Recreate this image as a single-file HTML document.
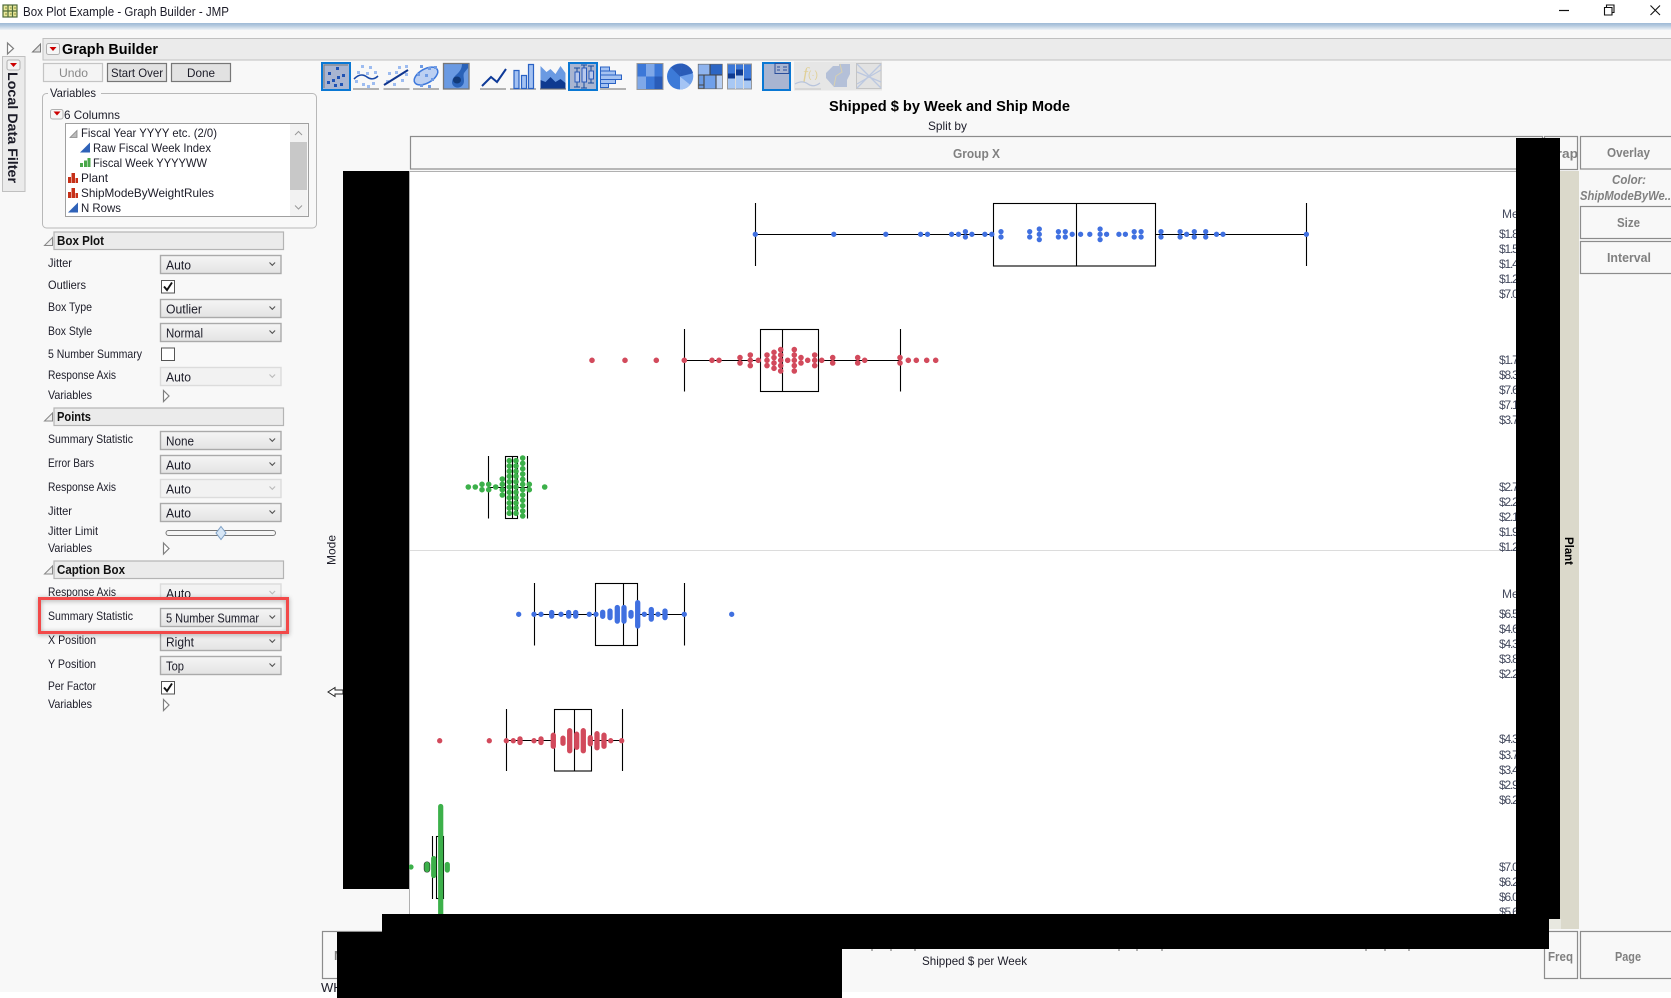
<!DOCTYPE html>
<html lang="en"><head><meta charset="utf-8"><title>Box Plot Example - Graph Builder - JMP</title>
<style>
html,body{margin:0;padding:0;background:#fff;width:1671px;height:998px;overflow:hidden}
svg{display:block;position:absolute;left:0;top:0}
text{font-family:"Liberation Sans",sans-serif;font-size:12px;fill:#1c1c28;white-space:pre}
.b{font-weight:bold}
.h{font-weight:bold;font-size:13px;fill:#111}
.g{font-weight:bold;fill:#808080;font-size:13px}
.c{font-size:12.5px}
.s{fill:#444a5e;font-size:12px;letter-spacing:-1.2px}
.sec{fill:#ebebeb;stroke:#b4b4b4;stroke-width:1.2}
.cb{fill:url(#cg);stroke:#aaa;stroke-width:1.4}
.cd{fill:#f2f2f2;stroke:#dcdcdc;stroke-width:1.4}
.ch{fill:none;stroke:#555;stroke-width:1.1}
.chd{fill:none;stroke:#bbb;stroke-width:1.1}
.tri{fill:#fff;stroke:#808080;stroke-width:1.2}
.gbx{fill:#f8f8f8;stroke:#8c8c8c;stroke-width:1.2}
.bx{fill:#fff;stroke:#000;stroke-width:1.1}
.wh{fill:none;stroke:#000;stroke-width:1.1}
.d{fill:none;stroke-linecap:round}
</style></head><body>
<svg width="1671" height="998" viewBox="0 0 1671 998" xmlns="http://www.w3.org/2000/svg">
<defs>
<linearGradient id="cg" x1="0" y1="0" x2="0" y2="1"><stop offset="0" stop-color="#f5f5f5"/><stop offset="1" stop-color="#e3e3e3"/></linearGradient>
<linearGradient id="st" x1="0" y1="0" x2="0" y2="1"><stop offset="0" stop-color="#9fbad6"/><stop offset=".4" stop-color="#b6cbe0"/><stop offset="1" stop-color="#eef2f6"/></linearGradient>
<filter id="sh" x="-10%" y="-40%" width="120%" height="180%"><feDropShadow dx="0" dy="1" stdDeviation="2.5" flood-color="#000" flood-opacity=".35"/></filter>
</defs>

<!-- backgrounds -->
<rect width="1671" height="998" fill="#fff"/>
<rect x="0" y="30" width="1671" height="962" fill="#f8f8f8"/>
<rect x="0" y="23" width="1671" height="7" fill="url(#st)"/>

<!-- title bar -->
<g>
<rect x="3" y="5" width="14" height="12" fill="#e8e89a" stroke="#4f6b3a" stroke-width="1.2"/>
<path d="M8 5V17M12.5 5V17M3 11H17" stroke="#4f6b3a" stroke-width="1.2" fill="none"/>
<path d="M5 8h2M10 8h1.5M14 8h2M5 14h2M10 14h1.5M14 14h2" stroke="#8a8a30" fill="none"/>
</g>
<text x="23" y="16" textLength="206" lengthAdjust="spacingAndGlyphs" style="font-size:13px">Box Plot Example - Graph Builder - JMP</text>
<path d="M1559 10.5h10" stroke="#111" stroke-width="1.2"/>
<path d="M1604.5 7.5h7.5v7.5h-7.5zM1606.5 7.5v-2.5h7.5v7.5h-2" fill="none" stroke="#111" stroke-width="1.1"/>
<path d="M1650.5 5.5l9.5 9.5M1660 5.5l-9.5 9.5" stroke="#111" stroke-width="1.1"/>

<!-- header -->
<path d="M7.5 43l6 5.5-6 5.5z" class="tri"/>
<rect x="2.5" y="56.5" width="22.5" height="135" fill="#ebebeb" stroke="#c0c0c0"/>
<rect x="7" y="60" width="13" height="10" rx="2" fill="#f4f4f4" stroke="#b0b0b0"/>
<path d="M10 63h7l-3.500 4z" fill="#c00"/>
<text class="b" transform="translate(8,72) rotate(90)" textLength="111" lengthAdjust="spacingAndGlyphs" style="font-size:14px">Local Data Filter</text>

<rect x="43" y="38.500" width="1640" height="21.500" fill="#ebebeb" stroke="#c0c0c0"/>
<path d="M32.500 52l8-8v8z" fill="#ddd" stroke="#777"/>
<rect x="46.500" y="43.500" width="13" height="11" rx="2" fill="#f6f6f6" stroke="#b0b0b0"/>
<path d="M49.500 47h7l-3.500 4z" fill="#c00"/>
<text class="b" x="62" y="54" textLength="96" lengthAdjust="spacingAndGlyphs" style="font-size:15px;fill:#000">Graph Builder</text>

<rect x="43.500" y="63.500" width="59" height="18" fill="#f4f4f4" stroke="#c4c4c4" stroke-width="1.200"/>
<text x="59" y="77" textLength="29" lengthAdjust="spacingAndGlyphs" style="fill:#888">Undo</text>
<rect x="107.500" y="63.500" width="59" height="18" fill="#e2e2e2" stroke="#777" stroke-width="1.200"/>
<text x="111" y="77" textLength="52" lengthAdjust="spacingAndGlyphs">Start Over</text>
<rect x="171.500" y="63.500" width="59" height="18" fill="#e2e2e2" stroke="#777" stroke-width="1.200"/>
<text x="187" y="77" textLength="28" lengthAdjust="spacingAndGlyphs">Done</text>

<!-- variables -->
<rect x="42.500" y="93.500" width="274" height="134.500" rx="4" fill="#f8f8f8" stroke="#b8b8b8"/>
<rect x="48" y="86" width="53" height="12" fill="#f8f8f8"/>
<text x="50" y="97" textLength="46" lengthAdjust="spacingAndGlyphs">Variables</text>
<rect x="50.500" y="109.500" width="12.500" height="9.500" rx="2" fill="#f6f6f6" stroke="#b0b0b0"/>
<path d="M53.500 111.500h7l-3.500 4z" fill="#c00"/>
<text x="64" y="119" textLength="56" lengthAdjust="spacingAndGlyphs">6 Columns</text>
<rect x="65.500" y="123.500" width="243" height="93" fill="#fff" stroke="#a0a0a0"/>
<rect x="290" y="124" width="17.500" height="92" fill="#f2f2f2"/>
<rect x="290" y="142" width="17" height="48" fill="#c8c8c8"/>
<path d="M295 135l3.500-3.500 3.500 3.500M295 205.500l3.500 3.500 3.500-3.500" fill="none" stroke="#999"/>
<path d="M70 137.500l7-7v7z" fill="#bbb" stroke="#888" stroke-width=".8"/>
<text x="81" y="137" textLength="136" lengthAdjust="spacingAndGlyphs">Fiscal Year YYYY etc. (2/0)</text>
<path d="M80 152.500l10-10v10z" fill="#2f62b8"/>
<text x="93" y="152" textLength="118" lengthAdjust="spacingAndGlyphs">Raw Fiscal Week Index</text>
<path d="M80 163h3v4h-3zM84 160.500h3v6.500h-3zM87.500 158h3v9h-3z" fill="#4aa84a"/>
<text x="93" y="167" textLength="114" lengthAdjust="spacingAndGlyphs">Fiscal Week YYYYWW</text>
<path d="M68 177h3v6h-3zM71.500 173h3.500v10h-3.500zM75.500 178h2.500v5h-2.500z" fill="#c63018"/>
<text x="81" y="182" textLength="27" lengthAdjust="spacingAndGlyphs">Plant</text>
<path d="M68 192h3v6h-3zM71.500 188h3.500v10h-3.500zM75.500 193h2.500v5h-2.500z" fill="#c63018"/>
<text x="81" y="197" textLength="133" lengthAdjust="spacingAndGlyphs">ShipModeByWeightRules</text>
<path d="M68 212.500l10-10v10z" fill="#2f62b8"/>
<text x="81" y="212" textLength="40" lengthAdjust="spacingAndGlyphs">N Rows</text>

<!-- section: box plot -->
<path d="M44.500 245.500l8-8v8z" fill="#eee" stroke="#888"/>
<rect class="sec" x="54" y="232" width="229.500" height="17.500"/>
<text class="h" x="57" y="245" textLength="47" lengthAdjust="spacingAndGlyphs">Box Plot</text>
<text x="48" y="267" textLength="24" lengthAdjust="spacingAndGlyphs">Jitter</text>
<rect class="cb" x="160.500" y="255.500" width="120.500" height="18"/><path class="ch" d="M269.500 262.500l2.800 2.800 2.800-2.800"/>
<text class="c" x="166" y="269.500" textLength="25" lengthAdjust="spacingAndGlyphs">Auto</text>
<text x="48" y="289" textLength="38" lengthAdjust="spacingAndGlyphs">Outliers</text>
<rect x="161.500" y="280.500" width="13" height="12.500" fill="#fff" stroke="#555"/>
<path d="M164 286.500l3 3.500 5-7.500" fill="none" stroke="#111" stroke-width="1.900"/>
<text x="48" y="311" textLength="44" lengthAdjust="spacingAndGlyphs">Box Type</text>
<rect class="cb" x="160.500" y="299.500" width="120.500" height="18"/><path class="ch" d="M269.500 306.500l2.800 2.800 2.800-2.800"/>
<text class="c" x="166" y="313.500" textLength="36" lengthAdjust="spacingAndGlyphs">Outlier</text>
<text x="48" y="335" textLength="44" lengthAdjust="spacingAndGlyphs">Box Style</text>
<rect class="cb" x="160.500" y="323.500" width="120.500" height="18"/><path class="ch" d="M269.500 330.500l2.800 2.800 2.800-2.800"/>
<text class="c" x="166" y="337.500" textLength="37" lengthAdjust="spacingAndGlyphs">Normal</text>
<text x="48" y="358" textLength="94" lengthAdjust="spacingAndGlyphs">5 Number Summary</text>
<rect x="161.500" y="348" width="13" height="12.500" fill="#fff" stroke="#555"/>
<text x="48" y="379" textLength="68" lengthAdjust="spacingAndGlyphs">Response Axis</text>
<rect class="cd" x="160.500" y="367.500" width="120.500" height="18"/><path class="chd" d="M269.500 374.500l2.800 2.800 2.800-2.800"/>
<text class="c" x="166" y="381.500" textLength="25" lengthAdjust="spacingAndGlyphs">Auto</text>
<text x="48" y="399" textLength="44" lengthAdjust="spacingAndGlyphs">Variables</text>
<path class="tri" d="M163.500 390.500l5.500 5.500-5.500 5.500z"/>

<!-- section: points -->
<path d="M44.500 421l8-8v8z" fill="#eee" stroke="#888"/>
<rect class="sec" x="54" y="408" width="229.500" height="17.500"/>
<text class="h" x="57" y="421" textLength="34" lengthAdjust="spacingAndGlyphs">Points</text>
<text x="48" y="443" textLength="85" lengthAdjust="spacingAndGlyphs">Summary Statistic</text>
<rect class="cb" x="160.500" y="431.500" width="120.500" height="18"/><path class="ch" d="M269.500 438.500l2.800 2.800 2.800-2.800"/>
<text class="c" x="166" y="445.500" textLength="28" lengthAdjust="spacingAndGlyphs">None</text>
<text x="48" y="467" textLength="46" lengthAdjust="spacingAndGlyphs">Error Bars</text>
<rect class="cb" x="160.500" y="455.500" width="120.500" height="18"/><path class="ch" d="M269.500 462.500l2.800 2.800 2.800-2.800"/>
<text class="c" x="166" y="469.500" textLength="25" lengthAdjust="spacingAndGlyphs">Auto</text>
<text x="48" y="491" textLength="68" lengthAdjust="spacingAndGlyphs">Response Axis</text>
<rect class="cd" x="160.500" y="479.500" width="120.500" height="18"/><path class="chd" d="M269.500 486.500l2.800 2.800 2.800-2.800"/>
<text class="c" x="166" y="493.500" textLength="25" lengthAdjust="spacingAndGlyphs">Auto</text>
<text x="48" y="515" textLength="24" lengthAdjust="spacingAndGlyphs">Jitter</text>
<rect class="cb" x="160.500" y="503.500" width="120.500" height="18"/><path class="ch" d="M269.500 510.500l2.800 2.800 2.800-2.800"/>
<text class="c" x="166" y="517.500" textLength="25" lengthAdjust="spacingAndGlyphs">Auto</text>
<text x="48" y="535" textLength="50" lengthAdjust="spacingAndGlyphs">Jitter Limit</text>
<rect x="166" y="530.500" width="109.500" height="5" rx="2.500" fill="#f6f6f6" stroke="#777"/>
<path d="M221 526.500l5 6.500-5 6.500-5-6.500z" fill="#d6e6f6" stroke="#7fa0c4"/>
<text x="48" y="552" textLength="44" lengthAdjust="spacingAndGlyphs">Variables</text>
<path class="tri" d="M163.500 543l5.500 5.500-5.500 5.500z"/>

<!-- section: caption box -->
<path d="M44.500 574l8-8v8z" fill="#eee" stroke="#888"/>
<rect class="sec" x="54" y="561" width="229.500" height="17.500"/>
<text class="h" x="57" y="574" textLength="68" lengthAdjust="spacingAndGlyphs">Caption Box</text>
<text x="48" y="596" textLength="68" lengthAdjust="spacingAndGlyphs">Response Axis</text>
<path d="M160.500 597v-13h120.500v13" fill="#f2f2f2" stroke="#dcdcdc" stroke-width="1.400"/>
<path class="chd" d="M269.500 591l2.800 2.800 2.800-2.800"/>
<text class="c" x="166" y="598" textLength="25" lengthAdjust="spacingAndGlyphs">Auto</text>
<rect class="cb" x="160.500" y="632.500" width="120.500" height="18"/><path class="ch" d="M269.500 639.500l2.800 2.800 2.800-2.800"/>
<text x="48" y="644" textLength="48" lengthAdjust="spacingAndGlyphs">X Position</text>
<text class="c" x="166" y="646.500" textLength="28" lengthAdjust="spacingAndGlyphs">Right</text>
<rect x="40" y="597" width="248" height="36" fill="#f8f8f8"/>
<text x="48" y="620" textLength="85" lengthAdjust="spacingAndGlyphs">Summary Statistic</text>
<rect class="cb" x="160.500" y="608.500" width="120.500" height="18"/><path class="ch" d="M269.500 615.500l2.800 2.800 2.800-2.800"/>
<text class="c" x="166" y="622.500" textLength="93" lengthAdjust="spacingAndGlyphs">5 Number Summar</text>
<rect x="39.500" y="598.500" width="248" height="34" fill="none" stroke="#f24a4a" stroke-width="3" filter="url(#sh)"/>
<text x="48" y="668" textLength="48" lengthAdjust="spacingAndGlyphs">Y Position</text>
<rect class="cb" x="160.500" y="656.500" width="120.500" height="18"/><path class="ch" d="M269.500 663.500l2.800 2.800 2.800-2.800"/>
<text class="c" x="166" y="670.500" textLength="18" lengthAdjust="spacingAndGlyphs">Top</text>
<text x="48" y="690" textLength="48" lengthAdjust="spacingAndGlyphs">Per Factor</text>
<rect x="161.500" y="681.500" width="13" height="12.500" fill="#fff" stroke="#555"/>
<path d="M164 687.500l3 3.500 5-7.500" fill="none" stroke="#111" stroke-width="1.900"/>
<text x="48" y="708" textLength="44" lengthAdjust="spacingAndGlyphs">Variables</text>
<path class="tri" d="M163.500 699.500l5.500 5.500-5.500 5.500z"/>

<!-- toolbar -->
<g fill="#6f9be4">
<rect x="322" y="63" width="28" height="27" fill="#a9b5d1" stroke="#0a78d4" stroke-width="2"/>
<path d="M324 88V65h24" fill="none" stroke="#777"/>
<path d="M336 67h3v3h-3zM328 72h3v3h-3zM342 74h3v3h-3zM332 79h3v3h-3zM337 76h3v3h-3zM327 81h3v3h-3zM340 83h3v3h-3zM334 84h3v3h-3z" fill="#1f52b4"/>
<path d="M353 89h26" stroke="#888" stroke-width="1.300"/>
<path d="M361 65h3v3h-3zM369 66h3v3h-3zM357 71h3v3h-3zM374 71h3v3h-3zM366 72h3v3h-3zM355 80h3v3h-3zM362 83h3v3h-3zM372 82h3v3h-3zM367 85h3v3h-3z" fill="#9dbcf0"/>
<path d="M354 79c5-5 9-5 13-2s8 2 11-1" fill="none" stroke="#1a4aa8" stroke-width="1.600"/>
<path d="M383.500 89h26" stroke="#888" stroke-width="1.300"/>
<path d="M398 66h3v3h-3zM405 65h3v3h-3zM388 72h3v3h-3zM395 71h3v3h-3zM386 80h3v3h-3zM393 83h3v3h-3zM401 79h3v3h-3zM405 73h3v3h-3z" fill="#9dbcf0"/>
<path d="M384 85l24-15" stroke="#10368f" stroke-width="2" fill="none"/>
<path d="M413 89h26" stroke="#888" stroke-width="1.300"/>
<ellipse cx="426" cy="76" rx="13" ry="7" transform="rotate(-30 426 76)" fill="#bcd0f2" stroke="#3d78dc" stroke-width="1.500"/>
<path d="M420 65h3v3h-3zM428 67h3v3h-3zM434 66h3v3h-3zM417 73h3v3h-3zM425 74h3v3h-3zM431 78h3v3h-3zM420 84h3v3h-3zM428 85h3v3h-3z"/>
<rect x="443.500" y="63.500" width="25.500" height="25.500" fill="#6a9ae2" stroke="#777" stroke-width="1.300"/>
<path d="M462 64c0 6-4 9-7 12-4 4-4 9 0 11s9-1 9-6c0-4-1-5 0-8l4-5v-4z" fill="#2a62b8"/>
<ellipse cx="457" cy="80" rx="4" ry="3.500" fill="#123a78"/>
<path d="M480 89h26" stroke="#888" stroke-width="1.300"/>
<path d="M482 86l9-9 6 5 9-13" fill="none" stroke="#0e3a98" stroke-width="2"/>
<path d="M510 89h26" stroke="#888" stroke-width="1.300"/>
<path d="M514 70.500h5v18h-5zM521.500 75.500h5v13h-5zM528.500 64.500h5v24h-5z" fill="#a4c2f2" stroke="#2a62c4" stroke-width="1.200"/>
<path d="M540 89h26" stroke="#777" stroke-width="1.300"/>
<path d="M540.500 88.500V66l6 6 4-3 5 5 5-8 5 7v15.500z" fill="#6a9ae2"/>
<path d="M540.500 88.500V80l5 2 5-5 5 5 5-3 5 4v5.500z" fill="#0e3a90"/>
<rect x="569" y="63" width="28" height="27" fill="#a9b5d1" stroke="#0a78d4" stroke-width="2"/>
<path d="M577 68v19M574 68h6M574 87h6M584 64.500v24M581 65h6M581 88h6M591 66v17M588 66h6M588 83h6" fill="none" stroke="#174a9c"/>
<path d="M575 72h4.500v10H575zM582 68h4.500v14H582zM589 71h4.500v8H589z" fill="#b8c8ec" stroke="#2b5ab8"/>
<path d="M600 89h26" stroke="#888" stroke-width="1.300"/>
<path d="M600.500 67h9v4h-9zM600.500 71h15v4h-15zM600.500 75h21v4.500h-21zM600.500 79.500h15v4h-15zM600.500 83.500h8v4h-8z" fill="#a4c2f2" stroke="#2a62c4"/>
<rect x="637" y="63.500" width="26" height="26" fill="#a8c4f0" stroke="#999"/>
<path d="M637.500 64h8.500v12.500h-8.500zM654.500 64h8v12.500h-8zM646 76.500h8.500v12.500h-8.500z" fill="#3c78d8"/>
<path d="M646 64h8.500v12.500h-8.500zM637.500 76.500h8.500v12.500h-8.500z" fill="#7fa8e8"/>
<path d="M654.500 76.500h8v12.500h-8z" fill="#2a5cb8"/>
<circle cx="680" cy="76.500" r="13" fill="#3c7ad8"/>
<path d="M680 76.500l2-13c6 1 10 5 11 9.500z" fill="#2a5cb8"/>
<path d="M680 76.500l13-3c1 5-1 9-3 11z" fill="#6fa0ea"/>
<path d="M680 76.500l10 8c-2 3-5 5-10 5z" fill="#a4c4f4"/>
<path d="M680 76.500l-9-9c2-2 7-4 11-4z" fill="#2a5cb8"/>
<rect x="698.500" y="64.500" width="23.500" height="24" fill="#6a9ae2" stroke="#666" stroke-width="1.300"/>
<path d="M710 64.500h12v10.500h-12z" fill="#2c66c4"/>
<path d="M698.500 64.500h11.500v10.500h-11.500z" fill="#8fb4ee"/>
<path d="M704 75h12v13.500h-12z" fill="#6fa0ea"/>
<path d="M716 75h6v13.500h-6z" fill="#b8d0f4"/>
<path d="M698.500 75H722M710 64.500V75M704 75v13.500M716 75v13.500M698.500 85h5.500" fill="none" stroke="#444" stroke-width="1.100"/>
<rect x="727.500" y="64" width="24" height="25" fill="#a8c8f4" stroke="#999"/>
<path d="M728 64.500h7v9h-7zM736 64.500h7v5h-7zM744 64.500h7v14h-7z" fill="#3c78d8"/>
<path d="M728 73.500h7v5h-7zM736 69.500h7v6h-7zM744 78.500h7v2h-7z" fill="#0e3a90"/>
<path d="M735.500 64v25M743.500 64v25" stroke="#ddd"/>
<rect x="763" y="63" width="27" height="27" fill="#a9b5d1" stroke="#0a78d4" stroke-width="2"/>
<rect x="775" y="63.500" width="14" height="10" fill="#a9b5d1" stroke="#2a4e9c"/>
<path d="M777 67h3M777 70h3M783 67h4M783 70h4" stroke="#2a4e9c" fill="none"/>
<rect x="794" y="61.500" width="88" height="29" fill="#e6e6e6"/>
<text x="803" y="79" style="font-family:'Liberation Serif',serif;font-style:italic;font-size:17px;fill:#e0d098">f</text>
<text x="808" y="78" style="font-size:10px;fill:#e0d098">(·)</text>
<path d="M795 84c5-3 9-3 13 0s8 2 12-1" fill="none" stroke="#b8c4dc" stroke-width="1.200"/>
<path d="M795 89h26" stroke="#ccc" stroke-width="1.200"/>
<path d="M826 73l7-7h6v-2h11v10l-3 6v7h-13l-8-9z" fill="#b4c0d8"/>
<path d="M840 64l2 8-6 4-2 10" fill="none" stroke="#d8d0b0"/>
<rect x="856.500" y="63.500" width="24.500" height="25" fill="#e2e2e2" stroke="#c4c4c4"/>
<path d="M857 64l24 24M857 72l24 10M857 84l24-14M857 88l24-24" stroke="#bcc8e0" stroke-width="1.300" fill="none"/>
</g>

<!-- titles -->
<text class="b" x="829" y="111" textLength="241" lengthAdjust="spacingAndGlyphs" style="font-size:15px;fill:#000">Shipped $ by Week and Ship Mode</text>
<text x="928" y="130" textLength="39" lengthAdjust="spacingAndGlyphs">Split by</text>

<!-- drop zones -->
<rect class="gbx" x="410.500" y="136.500" width="1132" height="32.500"/>
<text class="g" x="953" y="158" textLength="47" lengthAdjust="spacingAndGlyphs">Group X</text>
<rect class="gbx" x="1544.500" y="136.500" width="33" height="33"/>
<text class="g" x="1544" y="158" textLength="34" lengthAdjust="spacingAndGlyphs">Wrap</text>
<rect class="gbx" x="1580.500" y="136.500" width="100" height="32.500"/>
<text class="g" x="1607" y="157" textLength="43" lengthAdjust="spacingAndGlyphs">Overlay</text>
<text class="g" x="1612" y="184" textLength="34" lengthAdjust="spacingAndGlyphs" style="font-style:italic">Color:</text>
<text class="g" x="1580" y="200" textLength="91" lengthAdjust="spacingAndGlyphs" style="font-style:italic">ShipModeByWe..</text>
<rect class="gbx" x="1580.500" y="206.500" width="100" height="32"/>
<text class="g" x="1617" y="227" textLength="23" lengthAdjust="spacingAndGlyphs">Size</text>
<rect class="gbx" x="1580.500" y="241.500" width="100" height="32"/>
<text class="g" x="1607" y="262" textLength="44" lengthAdjust="spacingAndGlyphs">Interval</text>

<!-- plot -->
<rect x="409.500" y="171.500" width="1140" height="745" fill="#fff" stroke="#b0b0b0"/>
<path d="M410 550.500H1516" stroke="#dcdcdc"/>
<rect x="1560" y="171" width="19" height="758" fill="#dbd9cb"/>
<rect x="1549" y="919" width="12" height="10" fill="#e8e8e0"/>
<text class="b" transform="translate(1565,537) rotate(90)" textLength="28" lengthAdjust="spacingAndGlyphs" style="fill:#000">Plant</text>
<text transform="translate(335.500,565) rotate(-90)" textLength="30" lengthAdjust="spacingAndGlyphs">Mode</text>
<path d="M343 690h-8v-2.500l-7 4.500 7 4.500v-2.500h8z" fill="#fff" stroke="#222"/>

<!-- row 1 -->
<path class="wh" d="M755.500 203v63M1306.500 203v63M755.500 234.500H1306.500"/>
<rect class="bx" x="993.500" y="203.500" width="162" height="62.500"/><path class="wh" d="M1076.500 203.500V266"/>
<path class="d" stroke="#4070e0" stroke-width="5.300" d="M755.300 234.300h0M833.800 234.300h0M885.800 234.300h0M920.600 234.300h0M927.500 234.300h0M951.600 234.300h0M958.500 234.300h0M971.900 234.300h0M984.900 234.300h0M991.800 234.300h0M1072.200 234.300h0M1080.600 234.300h0M1089.800 234.300h0M1106.600 234.300h0M1118.900 234.300h0M1125.400 234.300h0M1186.600 234.300h0M1216.500 234.300h0M1223 234.300h0M1306.400 234.300h0
M965.400 231.600h0M965.400 237h0M1001 231.600h0M1001 237h0M1029.700 231.600h0M1029.700 237h0M1058.400 231.600h0M1058.400 237h0M1065.300 231.600h0M1065.300 237h0M1134.200 231.600h0M1134.200 237h0M1141.100 231.600h0M1141.100 237h0M1161 231.600h0M1161 237h0M1180.100 231.600h0M1180.100 237h0M1194.300 231.600h0M1194.300 237h0M1205.700 231.600h0M1205.700 237h0
M1039.300 229h0M1039.300 234.300h0M1039.300 239.600h0M1100.100 229h0M1100.100 234.300h0M1100.100 239.600h0"/>

<!-- row 2 -->
<path class="wh" d="M684.500 329v62.500M900.500 329v62.500M684.500 360.500H900.500"/>
<rect class="bx" x="760.500" y="329.500" width="58" height="62"/><path class="wh" d="M782.500 329.500V391.500"/>
<path class="d" stroke="#d24a5c" stroke-width="5.600" d="M592 360.300h0M625 360.300h0M656.300 360.300h0M684.300 360.300h0M712 360.300h0M719 360.300h0M758.300 360.300h0M787.700 360.300h0M807.700 360.300h0M821.700 360.300h0M864.700 360.300h0M908.300 360.300h0M916.300 360.300h0M926.700 360.300h0M935.700 360.300h0
M740 357.600h0M740 363h0M801 357.600h0M801 363h0M832.700 357.600h0M832.700 363h0M857.700 357.600h0M857.700 363h0M900 357.600h0M900 363h0
M750.300 355h0M750.300 360.300h0M750.300 365.600h0M767 355h0M767 360.300h0M767 365.600h0M814.700 355h0M814.700 360.300h0M814.700 365.600h0
M774 352.300h0M774 357.600h0M774 363h0M774 368.300h0
M780.700 349.600h0M780.700 355h0M780.700 360.300h0M780.700 365.600h0M780.700 371h0M794.300 349.600h0M794.300 355h0M794.300 360.300h0M794.300 365.600h0M794.300 371h0"/>

<!-- row 3 -->
<path class="wh" d="M488.500 456v62.500M527.500 456v62.500M488.500 487.500H527.500"/>
<rect class="bx" x="505.500" y="456.500" width="12" height="62"/><path class="wh" d="M512.500 456.500V518.500"/>
<path class="d" stroke="#3cb04a" stroke-width="5.600" d="M468.300 487h0M475.300 487h0M482 484.300h0M482 489.700h0M488.700 484.300h0M488.700 489.700h0M495.700 487h0M544.700 487h0M529.300 484.300h0M529.300 489.700h0
M502.300 479h0M502.300 484.300h0M502.300 489.700h0M502.300 495h0
M509.300 460.700h0M509.300 466h0M509.300 471.300h0M509.300 476.300h0M509.300 481.700h0M509.300 487h0M509.300 492.300h0M509.300 497.700h0M509.300 503h0M509.300 508h0M509.300 513.300h0
M516 460.700h0M516 466h0M516 471.300h0M516 476.300h0M516 481.700h0M516 487h0M516 492.300h0M516 497.700h0M516 503h0M516 508h0M516 513.300h0
M522.700 458h0M522.700 463.300h0M522.700 468.700h0M522.700 474h0M522.700 479.300h0M522.700 484.300h0M522.700 489.700h0M522.700 495h0M522.700 500.300h0M522.700 505.700h0M522.700 511h0M522.700 516h0"/>

<!-- row 4 -->
<path class="wh" d="M534.500 583v62.500M684.500 583v62.500M534.500 614.500H684.500"/>
<rect class="bx" x="595.500" y="583.500" width="42" height="62"/><path class="wh" d="M623.500 583.500V645.500"/>
<path class="d" stroke="#4070e0" stroke-width="5.300" d="M518.700 614.300h0M534 614.300h0M541 614.300h0M561 614.300h0M589.300 614.300h0M596 614.300h0M644.300 614.300h0M658 614.300h0M684.300 614.300h0M731.700 614.300h0
M551.700 612.500v3.600M568.700 612.500v3.600M575.700 612.500v3.600M602.700 612.300v4M610 611v6.600M617.300 607.500v13.600M624 607.500v13.600M631 612.500v3.600M637.700 602.600v23.400M651.300 609.500v9.600M665 611v6.600"/>

<!-- row 5 -->
<path class="wh" d="M506.500 709v62M622.500 709v62M506.500 740.500H622.500"/>
<rect class="bx" x="554.500" y="709.500" width="37" height="61.500"/><path class="wh" d="M574.500 709.500V771"/>
<path class="d" stroke="#d24a5c" stroke-width="5.300" d="M439.700 740.700h0M489.300 740.700h0M506.300 740.700h0M513.300 740.700h0M534 740.700h0M610.700 740.700h0M621.700 740.700h0
M520 738.900v3.600M541 738.900v3.600M553.300 735.200v11M563 738.200v5M569.700 730.700v20M576.700 734.200v13M583.300 730.700v20M590.300 737.700v6M597 733.700v14M604 735.200v11"/>

<!-- row 6 -->
<path class="wh" d="M432.500 836v63"/>
<rect class="bx" x="436.500" y="836.500" width="7" height="62"/>
<path class="d" stroke="#222" stroke-width="6.400" d="M427 864.700v4.600"/>
<path class="d" stroke="#3cb04a" stroke-width="5.200" d="M411 867h0M427 864.500v5M433.700 858.500v17M447.300 864.500v5.500M440.700 806.500V920"/>
<rect x="404" y="860" width="5" height="14" fill="#000"/>

<!-- captions -->
<g transform="translate(0,-1)">
<text class="s" x="1502" y="219" style="letter-spacing:0">Median</text>
<text class="s" x="1499" y="239">$1.8</text><text class="s" x="1499" y="254">$1.5</text><text class="s" x="1499" y="269">$1.4</text><text class="s" x="1499" y="284">$1.2</text><text class="s" x="1499" y="299">$7.0</text>
<text class="s" x="1499" y="365">$1.7</text><text class="s" x="1499" y="380">$8.3</text><text class="s" x="1499" y="395">$7.6</text><text class="s" x="1499" y="410">$7.1</text><text class="s" x="1499" y="425">$3.7</text>
<text class="s" x="1499" y="492">$2.7</text><text class="s" x="1499" y="507">$2.2</text><text class="s" x="1499" y="522">$2.1</text><text class="s" x="1499" y="537">$1.9</text><text class="s" x="1499" y="552">$1.2</text>
<text class="s" x="1502" y="599" style="letter-spacing:0">Median</text>
<text class="s" x="1499" y="619">$6.5</text><text class="s" x="1499" y="634">$4.6</text><text class="s" x="1499" y="649">$4.3</text><text class="s" x="1499" y="664">$3.8</text><text class="s" x="1499" y="679">$2.2</text>
<text class="s" x="1499" y="744">$4.3</text><text class="s" x="1499" y="760">$3.7</text><text class="s" x="1499" y="775">$3.4</text><text class="s" x="1499" y="790">$2.9</text><text class="s" x="1499" y="805">$6.2</text>
<text class="s" x="1499" y="872">$7.0</text><text class="s" x="1499" y="887">$6.2</text><text class="s" x="1499" y="902">$6.0</text><text class="s" x="1499" y="917">$5.6</text>
</g>

<!-- bottom -->
<path d="M872 949v2M891 949v2M915 949v2M1119 949v2M1137 949v2M1162 949v2M1366 949v2M1385 949v2M1409 949v2" stroke="#666"/>
<text x="922" y="965" textLength="105" lengthAdjust="spacingAndGlyphs">Shipped $ per Week</text>
<rect class="gbx" x="322.500" y="931.500" width="60" height="47"/>
<text class="g" x="334" y="960">M</text>
<text x="321" y="992" style="font-size:13px">WH</text>
<rect class="gbx" x="1544.500" y="931.500" width="33" height="47"/>
<text class="g" x="1548" y="961" textLength="25" lengthAdjust="spacingAndGlyphs">Freq</text>
<rect class="gbx" x="1580.500" y="931.500" width="100" height="47"/>
<text class="g" x="1615" y="961" textLength="26" lengthAdjust="spacingAndGlyphs">Page</text>

<!-- redaction blocks -->
<rect x="343" y="171" width="66" height="718" fill="#000"/>
<rect x="1516" y="138" width="44" height="781" fill="#000"/>
<rect x="382" y="914" width="1167" height="35" fill="#000"/>
<rect x="337" y="932" width="505" height="66" fill="#000"/>
</svg>
</body></html>
